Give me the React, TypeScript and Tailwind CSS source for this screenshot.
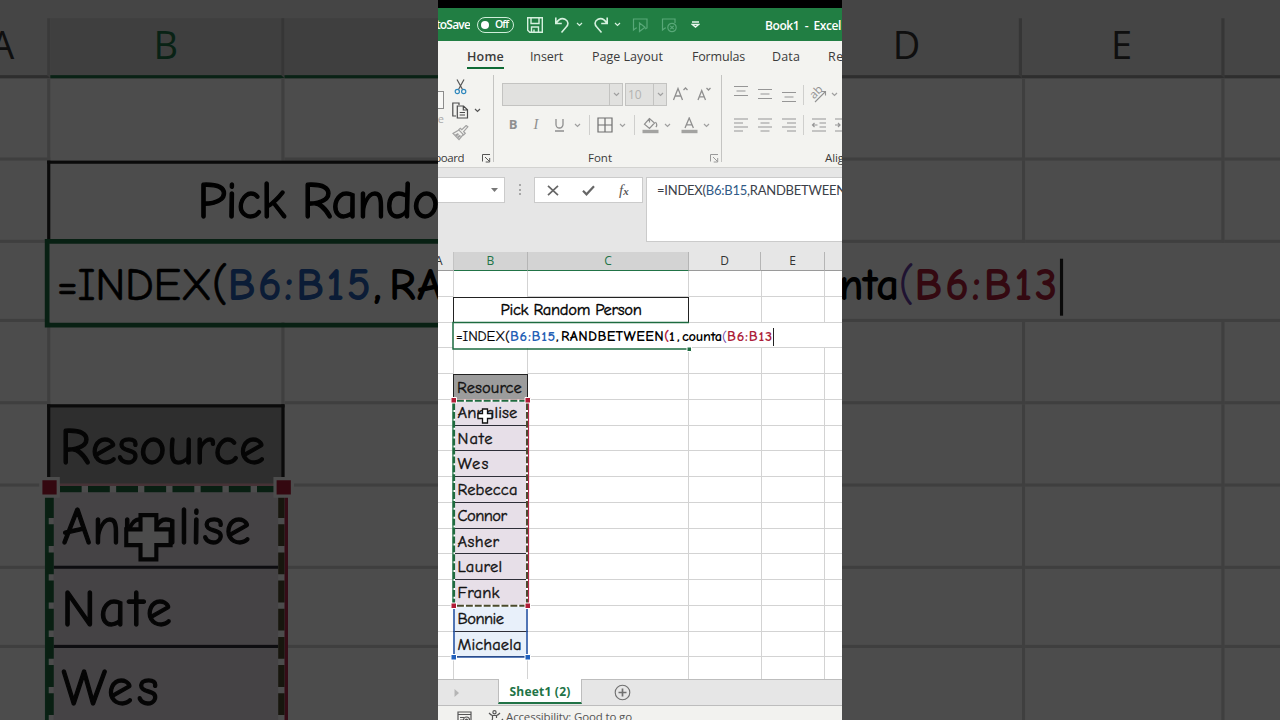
import { useLayoutEffect, useRef, useState, type ReactNode } from "react";

/** Inline text whose letter spacing is set so that it takes up `width` pixels. */
function Fit({ width, className = "", children }: { width: number; className?: string; children: ReactNode }) {
  const ref = useRef<HTMLSpanElement>(null);
  const [spacing, setSpacing] = useState(0);
  useLayoutEffect(() => {
    const el = ref.current;
    if (!el) return;
    el.style.letterSpacing = "0px";
    const count = (el.textContent ?? "").length;
    const next = (width - parseFloat(getComputedStyle(el).width)) / count;
    el.style.letterSpacing = `${next}px`;
    setSpacing(next);
  }, [width]);
  return (
    <span ref={ref} className={`inline-block shrink-0 whitespace-pre ${className}`} style={{ letterSpacing: spacing }}>
      {children}
    </span>
  );
}

function Chevron({ className = "w-3.5 text-[#a0a0a0]" }: { className?: string }) {
  return (
    <span className={`flex shrink-0 items-center justify-center ${className}`}>
      <svg width="7" height="5" viewBox="0 0 7 5" fill="none" stroke="currentColor" strokeWidth="1.2">
        <path d="M1 1l2.5 2.5L6 1" />
      </svg>
    </span>
  );
}

function TitleBar() {
  return (
    <div className="flex h-[33px] shrink-0 items-center bg-[#217e43] text-[12px] text-white">
      <div className="flex w-8 shrink-0 justify-end overflow-hidden">
        <Fit width={48} className="font-semibold">AutoSave</Fit>
      </div>
      <div className="ml-[7px] flex h-4 w-[37px] shrink-0 items-center rounded-full border-[1.5px] border-[#cfeeda] pl-[3px]">
        <span className="size-2 rounded-full bg-white" />
        <Fit width={13} className="ml-[6px] text-[10.5px] font-semibold leading-none">Off</Fit>
      </div>
      <svg className="ml-3 shrink-0" width="18" height="18" viewBox="0 0 18 18" fill="none" stroke="#d6f1df" strokeWidth="1.4">
        <path d="M1.700 1.700h14.600v14.600H3.700l-2-2zM5 2v5.500h8V2M5.500 16v-5h7v5M8 16v-2.500" />
      </svg>
      <svg className="ml-[10px] shrink-0" width="17" height="18" viewBox="0 0 17 18" fill="none" stroke="#d6f1df" strokeWidth="1.6">
        <path d="M1.800 1.500v6h6M2 7.300C4.500 3.500 8 1.800 11 3.300c3.700 1.900 3.700 5.300 1 8L7.500 16.500" />
      </svg>
      <Chevron className="ml-[1px] w-3.5 text-[#d6f1df]" />
      <svg className="ml-[6px] shrink-0" width="17" height="18" viewBox="0 0 17 18" fill="none" stroke="#d6f1df" strokeWidth="1.6">
        <path d="M15.200 1.500v6h-6M15 7.300C12.500 3.500 9 1.800 6 3.300c-3.700 1.900-3.700 5.300-1 8l4.500 5.200" />
      </svg>
      <Chevron className="ml-px w-3.5 text-[#d6f1df]" />
      <svg className="ml-[8px] shrink-0" width="17" height="16" viewBox="0 0 17 16" fill="none" stroke="#58a878" strokeWidth="1.2">
        <path d="M5 11H4l-2.500 2V2H15v9l-2 1M7.500 6v8.500l5.500-4.200z" />
      </svg>
      <svg className="ml-3 shrink-0" width="17" height="16" viewBox="0 0 17 16" fill="none" stroke="#58a878" strokeWidth="1.2">
        <path d="M5 11H4l-2.500 2V2H14v4" />
        <circle cx="11" cy="10.500" r="4.200" />
        <path d="M9.300 8.800l3.400 3.400M12.700 8.800l-3.400 3.400" />
      </svg>
      <svg className="ml-[13px] shrink-0" width="9" height="8" viewBox="0 0 9 8" fill="none" stroke="#e9f8ee" strokeWidth="1.400">
        <path d="M1 1h7M1.300 3.500L4.500 6.200l3.200-2.700z" />
      </svg>
      <Fit width={76} className="ml-[65px] mt-[2px] font-semibold">Book1  -  Excel</Fit>
    </div>
  );
}

function RibbonTabs() {
  return (
    <div className="flex h-8 shrink-0 items-center text-[12.500px] text-[#3b3b3b]">
      <div className="relative ml-[29px] flex h-full items-center pt-px">
        <Fit width={37} className="font-semibold">Home</Fit>
        <span className="absolute bottom-[4px] left-0 h-[2.500px] w-[37px] bg-[#0f6b35]" />
      </div>
      <Fit width={33} className="ml-[26px] mt-px">Insert</Fit>
      <Fit width={71} className="ml-[29px] mt-px">Page Layout</Fit>
      <Fit width={53} className="ml-[29px] mt-px">Formulas</Fit>
      <Fit width={28} className="ml-[27px] mt-px">Data</Fit>
      <Fit width={44} className="ml-[28px] mt-px">Review</Fit>
    </div>
  );
}

function Launcher({ className }: { className: string }) {
  return (
    <svg className={`shrink-0 ${className}`} width="9" height="9" viewBox="0 0 9 9" fill="none" stroke="currentColor" strokeWidth="1">
      <path d="M.5 7.500v-7H8M3 3l4.500 4.500M7.700 4v4h-4" />
    </svg>
  );
}

function ClipboardGroup() {
  return (
    <div className="flex h-[87px] w-[56px] shrink-0 flex-col border-r border-[#c4c4c2]">
      <div className="flex h-[70px] shrink-0">
        <div className="flex w-[6px] shrink-0 flex-col overflow-hidden">
          <span className="mt-4 h-[18px] w-[6px] shrink-0 border border-l-0 border-[#8c8c8c] bg-[#f8f8f6]" />
          <span className="mt-[2px] flex h-4 shrink-0 justify-end text-[11px] leading-4 text-[#a9a9a9]">Paste</span>
        </div>
        <div className="flex flex-col pl-2">
          <svg className="ml-[1px] mt-1 shrink-0" width="15" height="16" viewBox="0 0 15 16" fill="none" strokeWidth="1.200">
            <path d="M4 .5l5.500 10M11 .5l-5.500 10" stroke="#555" />
            <circle cx="4.300" cy="12.500" r="2.100" stroke="#2f88bd" />
            <circle cx="10.700" cy="12.500" r="2.100" stroke="#2f88bd" />
          </svg>
          <div className="mt-[7px] flex items-center">
            <svg width="17" height="17" viewBox="0 0 17 17" fill="none" stroke="#4b4b4b" strokeWidth="1.200">
              <path d="M4 14H.8V1H7v2M5.300 4h6.200l4 3.800V16H5.300zM11.300 4.200V8h4M7.700 10.500H13M7.700 13H13" />
            </svg>
            <Chevron className="ml-px w-3.5 text-[#555]" />
          </div>
          <svg className="mt-[6px] shrink-0" width="17" height="16" viewBox="0 0 17 16" fill="none" stroke="#a2a2a2" strokeWidth="1.200">
            <path d="M15.800 1.800L14.200.5 9.800 4.600 8.300 3.300 6.700 4.800l5 5 1.600-1.500-1.700-1.700zM6.500 5.300L1 8.500l6 6.200 4.200-5.200" />
            <path d="M3.500 10.500l3-1.500M5.500 12.500l3-2" strokeWidth="2" />
          </svg>
        </div>
      </div>
      <div className="mt-[5px] flex h-4 shrink-0 items-center text-[11.500px] text-[#3b3b3b]">
        <div className="flex w-[26px] justify-end overflow-hidden">
          <Fit width={48}>Clipboard</Fit>
        </div>
        <Launcher className="ml-[18px] text-[#555]" />
      </div>
    </div>
  );
}

function Combo({ className, children }: { className: string; children?: ReactNode }) {
  return (
    <div className={`flex h-[23px] shrink-0 border border-[#c3c3c1] bg-[#e1e1df] text-[12px] text-[#b3b3b1] ${className}`}>
      <span className="flex flex-1 items-center pl-[2px]">{children}</span>
      <Chevron className="w-[13px] border-l border-[#c3c3c1] text-[#a0a0a0]" />
    </div>
  );
}

function FontGroup() {
  return (
    <div className="flex h-[87px] w-[228px] shrink-0 flex-col border-r border-[#c4c4c2] pl-2 text-[#8f8f8f]">
      <div className="mt-2 flex h-[23px] items-center">
        <Combo className="w-[121px]" />
        <Combo className="ml-[2px] w-[42px]">10</Combo>
        <svg className="ml-[5px]" width="17" height="17" viewBox="0 0 17 17" fill="none" stroke="currentColor" strokeWidth="1.300">
          <path d="M1.500 14L6 2.500 10.500 14M3.200 10h5.600M11.500 4l2-2 2 2" />
        </svg>
        <svg className="ml-[8px]" width="15" height="17" viewBox="0 0 15 17" fill="none" stroke="currentColor" strokeWidth="1.300">
          <path d="M1 14l3.700-9.500L8.500 14M2.500 10.800h4.500M9.500 2l2 2 2-2" />
        </svg>
      </div>
      <div className="mt-[9px] flex h-5 items-center text-[13px]">
        <span className="w-[22px] shrink-0 text-center font-bold">B</span>
        <span className="w-6 shrink-0 text-center font-['Liberation_Serif',serif] text-[14.500px] italic">I</span>
        <span className="flex w-[22px] shrink-0 justify-center">
          <svg width="11" height="14" viewBox="0 0 11 14" fill="none" stroke="currentColor" strokeWidth="1.300">
            <path d="M2 1v5.500a3.500 3.500 0 007 0V1M1 13h9" />
          </svg>
        </span>
        <Chevron />
        <span className="ml-[5px] h-5 w-px bg-[#cfcfcd]" />
        <svg className="ml-[7px] shrink-0" width="16" height="16" viewBox="0 0 16 16" fill="none" stroke="#6f6f6f" strokeWidth="1.200">
          <path d="M1 1h14v14H1zM8 1v14M1 8h14" />
        </svg>
        <Chevron className="ml-[2px] w-3.5 text-[#a0a0a0]" />
        <span className="ml-[5px] h-5 w-px bg-[#cfcfcd]" />
        <svg className="ml-[7px] shrink-0" width="17" height="17" viewBox="0 0 17 17" fill="none" stroke="currentColor" strokeWidth="1.200">
          <path d="M7.500 1.500L2.500 7.200l5 4.300 5-5.500zM7.500 1v4.500M13.500 5c1.500 2 1.500 4 .3 5" />
          <path d="M.5 14.500h16" strokeWidth="3.400" stroke="#a3a3a1" />
        </svg>
        <Chevron className="ml-[1px] w-3.5 text-[#a0a0a0]" />
        <svg className="ml-[7px] shrink-0" width="17" height="17" viewBox="0 0 17 17" fill="none" stroke="currentColor" strokeWidth="1.300">
          <path d="M4 11L8.200 1 12.400 11M5.400 7.800h5.600" />
          <path d="M.5 14.500h16" strokeWidth="3.400" stroke="#a3a3a1" />
        </svg>
        <Chevron className="ml-[1px] w-3.5 text-[#a0a0a0]" />
      </div>
      <div className="mt-[15px] flex h-4 items-center text-[11.500px] text-[#3b3b3b]">
        <Fit width={24} className="ml-[86px]">Font</Fit>
        <Launcher className="ml-[98px] text-[#9a9a9a]" />
      </div>
    </div>
  );
}

function Lines({ d, className = "" }: { d: string; className?: string }) {
  return (
    <svg className={`shrink-0 ${className}`} width="16" height="18" viewBox="0 0 16 18" fill="none" stroke="#969696" strokeWidth="1.200">
      <path d={d} />
    </svg>
  );
}

function AlignmentGroup() {
  return (
    <div className="flex w-[120px] shrink-0 flex-col pl-[11px]">
      <div className="mt-2 flex h-[23px] items-center">
        <Lines d="M1 3.500h14M3.500 8h9M1 12.500h14" className="-mt-[5px]" />
        <Lines d="M1 3.500h14M3.500 8h9M1 12.500h14" className="ml-2 mt-[1px]" />
        <Lines d="M1 3.500h14M3.500 8h9M1 12.500h14" className="ml-2 mt-[7px]" />
        <span className="ml-[6px] h-5 w-px shrink-0 bg-[#cfcfcd]" />
        <span className="relative ml-[6px] h-4 w-[18px] shrink-0 text-[#929292]">
          <span className="absolute -left-[1px] -top-[1px] -rotate-45 text-[11.500px] leading-none">ab</span>
          <svg className="absolute left-[3px] top-[3px]" width="14" height="13" viewBox="0 0 14 13" fill="none" stroke="currentColor" strokeWidth="1.100">
            <path d="M2 12L12 2M8.500 1.500H12.500V5.500" />
          </svg>
        </span>
        <Chevron className="w-3 text-[#a0a0a0]" />
      </div>
      <div className="mt-[9px] flex h-5 items-center">
        <Lines d="M1 3h14M1 7h9M1 11h14M1 15h9" />
        <Lines d="M1 3h14M3.500 7h9M1 11h14M3.500 15h9" className="ml-2" />
        <Lines d="M1 3h14M6 7h9M1 11h14M6 15h9" className="ml-2" />
        <span className="ml-[6px] h-5 w-px shrink-0 bg-[#cfcfcd]" />
        <Lines d="M1 3h14M8.500 7H15M8.500 11H15M1 15h14M6.500 9H1.500M3.500 7l-2 2 2 2" className="ml-[7px]" />
        <Lines d="M1 3h14M8.500 7H15M8.500 11H15M1 15h14M1 9h5M4 7l2 2-2 2" className="ml-[7px]" />
      </div>
      <div className="mt-[15px] flex h-4 items-center text-[11.500px] text-[#3b3b3b]">
        <Fit width={54} className="ml-[92px]">Alignment</Fit>
      </div>
    </div>
  );
}

function FormulaBar() {
  return (
    <div className="flex h-[75px] shrink-0 items-start border-t border-[#d2d2d0] bg-[#e6e6e6] pt-[9px]">
      <div className="flex h-[26px] w-[67px] shrink-0 items-center justify-end border border-l-0 border-[#cbcbcb] bg-white pr-[6px]">
        <svg width="7" height="4" viewBox="0 0 7 4" fill="#777">
          <path d="M0 0h7L3.500 4z" />
        </svg>
      </div>
      <div className="ml-[14px] mt-[7px] flex w-[2px] shrink-0 flex-col gap-[2.500px]">
        <span className="size-[2px] bg-[#a8a8a8]" />
        <span className="size-[2px] bg-[#a8a8a8]" />
        <span className="size-[2px] bg-[#a8a8a8]" />
      </div>
      <div className="ml-[13px] flex h-[26px] w-[109px] shrink-0 items-center border border-[#cbcbcb] bg-white">
        <svg className="ml-3" width="12" height="11" viewBox="0 0 12 11" fill="none" stroke="#666" strokeWidth="1.700">
          <path d="M1 .8l10 9.400M11 .8L1 10.200" />
        </svg>
        <svg className="ml-[23px]" width="13" height="11" viewBox="0 0 13 11" fill="none" stroke="#666" strokeWidth="2.200">
          <path d="M1 5.800l3.500 3.500L12 1.300" />
        </svg>
        <span className="ml-6 font-['Liberation_Serif',serif] text-[15px] italic leading-none text-[#555]">
          f<span className="text-[11px] font-bold">x</span>
        </span>
      </div>
      <div className="ml-[3px] h-[65px] w-[205px] shrink-0 border border-[#cbcbcb] bg-white pl-[10px] pt-[3px] font-['Lato',sans-serif] text-[13px] leading-[18px] text-[#3b4048]">
        <Fit width={189}>
          =INDEX(<span className="text-[#315a86]">B6:B15</span>,RANDBETWEEN
        </Fit>
      </div>
    </div>
  );
}

const people: [string, number][] = [
  ["Annalise", 60],
  ["Nate", 36],
  ["Wes", 32],
  ["Rebecca", 60],
  ["Connor", 49],
  ["Asher", 42],
  ["Laurel", 45],
  ["Frank", 42],
  ["Bonnie", 46],
  ["Michaela", 64],
];

const line = "border-[#d3d3d3]";

function TrailingCells() {
  return (
    <>
      <span className={`w-[73px] shrink-0 border-b border-r ${line}`} />
      <span className={`w-[63px] shrink-0 border-b border-r ${line}`} />
      <span className={`w-[20px] shrink-0 border-b ${line}`} />
    </>
  );
}

function EmptyRow({ flush = false }: { flush?: boolean }) {
  return (
    <div className="flex h-[25.750px] shrink-0">
      <span className={`w-4 shrink-0 border-b border-r ${line}`} />
      <span className={`w-[74px] shrink-0 border-r ${flush ? "" : "border-b"} ${line}`} />
      <span className={`w-[161px] shrink-0 border-b border-r ${line}`} />
      <TrailingCells />
    </div>
  );
}

function ColumnHeaders() {
  return (
    <div className="flex h-[19px] shrink-0 text-[12px] text-[#333]">
      <span className="flex w-4 shrink-0 items-center border-b border-r border-b-[#9a9a9a] border-r-[#c3c3c3]">
        <span className="-ml-[3px]">A</span>
      </span>
      <span className="flex w-[74px] shrink-0 items-center justify-center border-b border-r border-b-[#217346] border-r-[#b5b5b5] bg-[#d3d3d3] text-[#217346]">B</span>
      <span className="flex w-[161px] shrink-0 items-center justify-center border-b border-r border-b-[#217346] border-r-[#b5b5b5] bg-[#d3d3d3] text-[#217346]">C</span>
      <span className="flex w-[72px] shrink-0 items-center justify-center border-b border-r border-b-[#9a9a9a] border-r-[#b5b5b5]">D</span>
      <span className="flex w-[64px] shrink-0 items-center justify-center border-b border-r border-b-[#9a9a9a] border-r-[#b5b5b5]">E</span>
      <span className="w-5 shrink-0 border-b border-[#9a9a9a]" />
    </div>
  );
}

function RangeOutlines() {
  return (
    <svg className="absolute left-[10px] top-[151.700px]" width="86" height="270" viewBox="0 0 86 270" fill="none">
      <path d="M6 212v51h73v-51" stroke="#2b57a5" strokeWidth="1.600" />
      <path d="M6.500 5.500h73" stroke="#e9a9b4" strokeWidth="1" />
      <path d="M80.300 6v206" stroke="#b3274a" strokeWidth="1.600" />
      <path d="M5.800 6.500v205.500" stroke="#fff" strokeWidth="2.400" />
      <path d="M4.900 6.500v205.500" stroke="#217346" strokeWidth="1.200" />
      <path d="M5.900 9v203" stroke="#1f6a3f" strokeWidth="2.400" strokeDasharray="6.900 2" />
      <path d="M8 6.800h72M8 211.700h72M79 8v203" stroke="#fff" strokeWidth="2" />
      <path d="M9 6.800h69" stroke="#1f6a3f" strokeWidth="2" strokeDasharray="6.900 2" />
      <path d="M9 211.700h69" stroke="#4a4a2c" strokeWidth="2" strokeDasharray="6.900 2" />
      <path d="M79 9v203" stroke="#4d4a2f" strokeWidth="2" strokeDasharray="6.900 2" />
      <g stroke="#fff" strokeWidth="1">
        <path d="M3 3.500h5.500v5.500H3zM77 3.500h5.500v5.500H77zM3 209h5.500v5.500H3zM77 209h5.500v5.500H77z" fill="#b01c37" />
        <path d="M3 260.500h5.500v5.500H3zM77 260.500h5.500v5.500H77z" fill="#2060bd" />
      </g>
    </svg>
  );
}

/** The grid with its column headers, the open cell editor and the marked ranges. */
function Sheet() {
  return (
    <div className="relative flex h-[437px] w-[406px] shrink-0 flex-col overflow-hidden bg-white font-['Comic_Neue','Open_Sans',sans-serif]">
      <div className="flex h-[29.150px] shrink-0 flex-col justify-end bg-[#e6e6e6] font-['Open_Sans',sans-serif]">
        <ColumnHeaders />
      </div>
      <EmptyRow flush />
      <div className="flex h-[25.750px] shrink-0">
        <span className={`w-[15px] shrink-0 border-b ${line}`} />
        <span className="flex w-[236px] shrink-0 items-center justify-center border border-b-0 border-[#222] pt-px text-[16.500px] text-black [-webkit-text-stroke:0.4px_black]">
          <Fit width={141}>Pick Random Person</Fit>
        </span>
        <TrailingCells />
      </div>
      <div className="relative flex h-[25.750px] shrink-0">
        <span className={`w-[15px] shrink-0 border-b ${line}`} />
        <span className="flex w-[236px] shrink-0 items-center pl-[3px] pt-[2px] text-[14.500px] text-black">
          <Fit width={54} className="[-webkit-text-stroke:0.2px_black]">=INDEX(</Fit>
          <Fit width={46} className="font-bold text-[#2560b5]">B6:B15</Fit>
          <Fit width={5} className="font-bold">,</Fit>
          <Fit width={103} className="font-bold">RANDBETWEEN</Fit>
          <Fit width={5} className="font-bold text-[#b0223c]">(</Fit>
          <Fit width={13} className="font-bold">1,</Fit>
          <Fit width={40} className="font-bold">counta</Fit>
          <Fit width={5} className="text-[#6a41a5]">(</Fit>
          <Fit width={46} className="font-bold text-[#ad1f3b]">B6:B13</Fit>
          <span className="h-[18px] w-px shrink-0 bg-[#222]" />
        </span>
        <span className={`flex-1 border-b ${line}`} />
      </div>
      <EmptyRow flush />
      <div className="flex h-[25.750px] shrink-0">
        <span className={`w-[15px] shrink-0 border-b ${line}`} />
        <span className="flex w-[75px] shrink-0 items-center border border-b-0 border-[#222] bg-[#9c9c9c] pl-[3px] pt-px text-[16.500px] text-[#111] [-webkit-text-stroke:0.4px_#111]">
          <Fit width={65}>Resource</Fit>
        </span>
        <span className={`w-[161px] shrink-0 border-b border-r ${line}`} />
        <TrailingCells />
      </div>
      {people.map(([name, width], i) => (
        <div key={name} className="flex h-[25.750px] shrink-0">
          <span className={`w-[15px] shrink-0 border-b ${line}`} />
          <span
            className={`flex w-[75px] shrink-0 items-center border-b border-[#2e2e38] pl-[4.500px] pt-[2px] text-[16.500px] text-[#111] [-webkit-text-stroke:0.4px_#111] ${
              i < 8 ? "bg-[#e7dfe8]" : "bg-[#e8f0fa]"
            }`}
          >
            <Fit width={width}>{name}</Fit>
          </span>
          <span className={`w-[161px] shrink-0 border-b border-r ${line}`} />
          <TrailingCells />
        </div>
      ))}
      <EmptyRow />
      <svg className="absolute left-[13px] top-[78px]" width="242" height="32" viewBox="0 0 242 32" fill="none">
        <path d="M238 2.500H2v26.500h234" stroke="#1d6b40" strokeWidth="1.500" />
        <path d="M236 27h4.500v4.500H236z" fill="#1d6b40" stroke="#fff" />
      </svg>
      <RangeOutlines />
      <svg className="absolute left-[39px] top-[166px]" width="16" height="16" viewBox="0 0 16 16">
        <path d="M5.500 1h5v4.500H15v5h-4.500V15h-5v-4.500H1v-5h4.500z" fill="#fff" stroke="#111" strokeWidth="1.300" />
      </svg>
    </div>
  );
}

function SheetTabs() {
  return (
    <div className="flex h-[27px] shrink-0 items-start border-y border-[#bdbdbd] bg-[#e6e6e6]">
      <svg className="ml-[16px] mt-[9px]" width="5" height="8" viewBox="0 0 5 8" fill="#b5b5b5">
        <path d="M.5 0v8L5 4z" />
      </svg>
      <div className="-mt-px ml-[39px] flex h-[25px] w-[84px] items-center justify-center border-x border-b-2 border-x-[#bdbdbd] border-b-[#217346] bg-white pt-[2px] text-[12px] font-bold text-[#217346]">
        <Fit width={61}>Sheet1 (2)</Fit>
      </div>
      <svg className="ml-[32px] mt-[4px]" width="17" height="17" viewBox="0 0 17 17" fill="none" stroke="#707070">
        <circle cx="8.500" cy="8.500" r="7.300" strokeWidth="1.100" />
        <path d="M8.500 4.500v8M4.500 8.500h8" strokeWidth="1.700" />
      </svg>
    </div>
  );
}

function StatusBar() {
  return (
    <div className="flex h-[24px] shrink-0 items-start bg-[#f2f2ef] text-[11.500px] text-[#555]">
      <svg className="ml-[19px] mt-[5px]" width="15" height="14" viewBox="0 0 15 14" fill="none" stroke="#555" strokeWidth="1.200">
        <path d="M1 13V1h13v12M1 3.500h13M3 6.500h4M3 9h3" />
        <circle cx="9.500" cy="9" r="3" />
        <circle cx="9.500" cy="9" r="1" fill="#555" />
      </svg>
      <svg className="ml-[16px] mt-[4px]" width="16" height="15" viewBox="0 0 16 15" fill="none" stroke="#555" strokeWidth="1.200">
        <circle cx="6.500" cy="2.300" r="1.600" />
        <path d="M1 3c2 2 3 2.300 3.500 2.500V9L3 13M12 3c-2 2-3 2.300-3.500 2.500V8M4.500 5.500h4M9.500 10.500l2 2 3.500-3.500" />
      </svg>
      <Fit width={126} className="ml-[2px] mt-[2px]">Accessibility: Good to go</Fit>
    </div>
  );
}

export default function App() {
  return (
    <div className="relative flex h-[720px] w-[1280px] justify-center overflow-hidden bg-black font-['Open_Sans',sans-serif]">
      <div className="absolute left-[437px] top-[242px] origin-[202px_118px] scale-[3.165]" aria-hidden="true">
        <Sheet />
      </div>
      <div className="absolute inset-0 bg-black/70" />
      <div className="relative flex h-[720px] w-[404px] flex-col overflow-hidden bg-black pt-2">
        <TitleBar />
        <div className="flex h-[126px] shrink-0 flex-col bg-[#f3f3f0]">
          <RibbonTabs />
          <div className="mt-[2px] flex">
            <ClipboardGroup />
            <FontGroup />
            <AlignmentGroup />
          </div>
        </div>
        <FormulaBar />
        <Sheet />
        <SheetTabs />
        <StatusBar />
      </div>
    </div>
  );
}
